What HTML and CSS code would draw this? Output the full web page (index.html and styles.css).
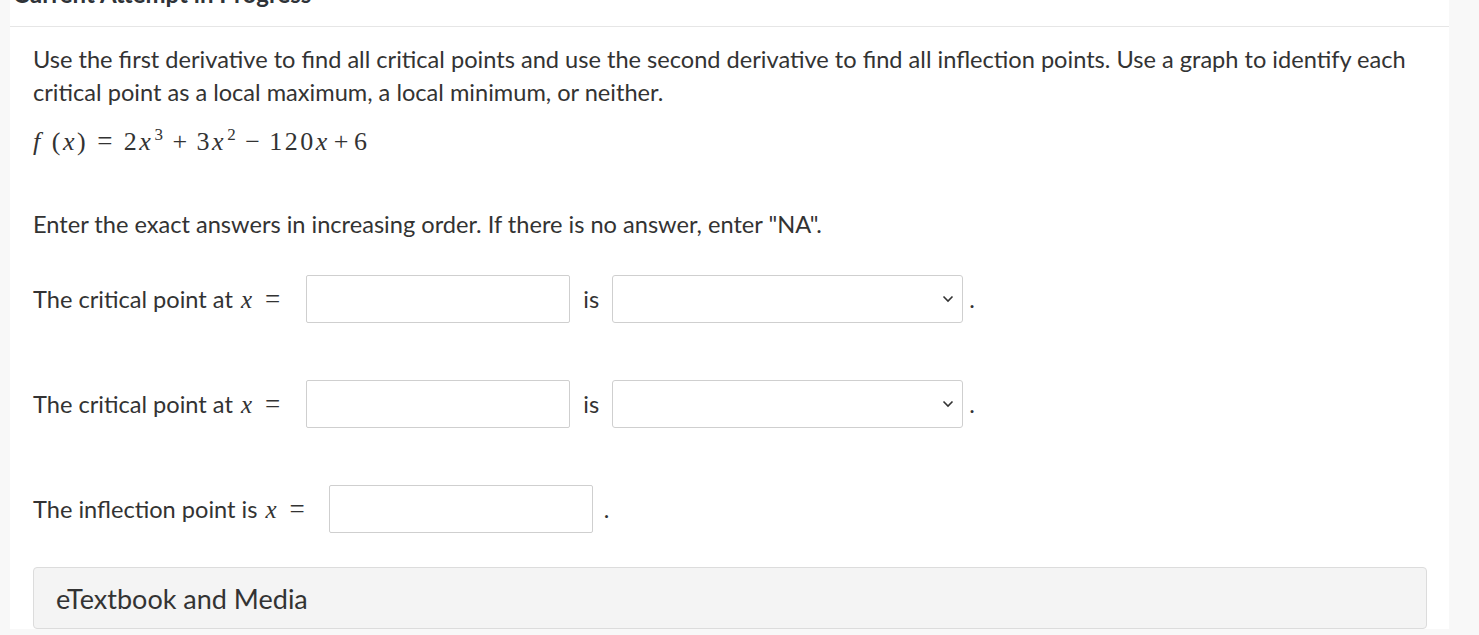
FILE: index.html
```html
<!DOCTYPE html>
<html>
<head>
<meta charset="utf-8">
<link rel="stylesheet" href="styles.css">
</head>
<body>
<div class="panel">
  <h2 class="attempt">Current Attempt in Progress</h2>
  <div class="content">
    <p class="question">Use the first derivative to find all critical points and use the second derivative to find all inflection points. Use a graph to identify each critical point as a local maximum, a local minimum, or neither.</p>
    <p class="math"><i>f</i> <span class="par">(<i>x</i>)</span><span class="rel">=</span>2<i>x</i><sup>3</sup><span class="op">+</span>3<i>x</i><sup>2</sup><span class="op">&minus;</span>120<i>x</i><span class="op last">+</span>6</p>
    <p class="instr">Enter the exact answers in increasing order. If there is no answer, enter "NA".</p>

    <div class="row">
      <span class="label">The critical point at <span class="mv"><i>x</i><span class="eq">=</span></span></span>
      <input class="ans" type="text">
      <span class="is">is</span>
      <div class="sel"><svg class="chev" width="12" height="8" viewBox="0 0 12 8"><path d="M1.5 1.5 L6 6 L10.5 1.5" fill="none" stroke="#333" stroke-width="1.6"/></svg></div>
      <span class="dot">.</span>
    </div>

    <div class="row">
      <span class="label">The critical point at <span class="mv"><i>x</i><span class="eq">=</span></span></span>
      <input class="ans" type="text">
      <span class="is">is</span>
      <div class="sel"><svg class="chev" width="12" height="8" viewBox="0 0 12 8"><path d="M1.5 1.5 L6 6 L10.5 1.5" fill="none" stroke="#333" stroke-width="1.6"/></svg></div>
      <span class="dot">.</span>
    </div>

    <div class="row">
      <span class="label">The inflection point is <span class="mv"><i>x</i><span class="eq">=</span></span></span>
      <input class="ans ans3" type="text">
      <span class="dot dot2">.</span>
    </div>

    <div class="media">eTextbook and Media</div>
  </div>
</div>
</body>
</html>
```
FILE: styles.css
```css
html, body {
  margin: 0;
  padding: 0;
  background: #f8f8f8;
}
body {
  font-family: Lato, "Noto Sans", sans-serif;
  color: #333;
}
.panel {
  margin: 0 30px 0 10px;
  background: #fff;
  min-height: 635px;
}
.attempt {
  margin: 0;
  height: 26px;
  margin-top: -19px;
  padding-left: 3px;
  font-size: 24px;
  line-height: 26px;
  font-weight: 700;
  color: #2f3338;
  border-bottom: 1px solid #e6e6e6;
  box-sizing: content-box;
  padding-bottom: 19px;
}
.content {
  padding: 16px 22px 0 23px;
}
.question {
  margin: 0;
  font-size: 23.6px;
  line-height: 33px;
}
.math {
  margin: 16px 0 0 0;
  font-family: "Liberation Serif", "Times New Roman", serif;
  font-size: 26px;
  line-height: 33px;
  letter-spacing: 2.5px;
  color: #333;
}
.math i { font-style: italic; }
.math .rel { margin: 0 9px 0 9px; font-size: 27px; }
.math .op { margin: 0 7px; }
.math .op.last { margin: 0 3px 0 4px; }
.math sup { font-size: 17px; line-height: 0; vertical-align: 10px; margin-left: 1px; }
.instr {
  margin: 50px 0 0 0;
  font-size: 23.6px;
  line-height: 33px;
}
.row {
  display: flex;
  align-items: center;
  height: 48px;
  margin-top: 34px;
  font-size: 23.6px;
}
.row + .row { margin-top: 57px; }
.label { white-space: nowrap; }
.mv {
  font-family: "Liberation Serif", "Times New Roman", serif;
  font-size: 25px;
  margin-left: 2px;
}
.eq { margin-left: 13px; font-size: 27px; }
.ans {
  box-sizing: border-box;
  width: 264px;
  height: 48px;
  margin: 0 0 0 26px;
  border: 1px solid #cfcfcf;
  border-radius: 2px;
  background: #fff;
  padding: 0 8px;
  font-size: 18px;
}
.ans3 { margin-left: 24px; }
.is { margin: 0 13px 0 13px; }
.sel {
  box-sizing: border-box;
  width: 351px;
  height: 48px;
  border: 1px solid #cfcfcf;
  border-radius: 3px;
  background: #fff;
  display: flex;
  align-items: center;
  justify-content: flex-end;
  padding-right: 8px;
}
.dot { margin-left: 6px; }
.dot2 { margin-left: 11px; }
.media {
  margin-top: 34px;
  box-sizing: border-box;
  height: 62px;
  border: 1px solid #dcdcdc;
  border-radius: 4px;
  background: #f4f4f4;
  padding: 0 22px;
  display: flex;
  align-items: center;
  font-size: 27px;
  color: #333;
}
```
